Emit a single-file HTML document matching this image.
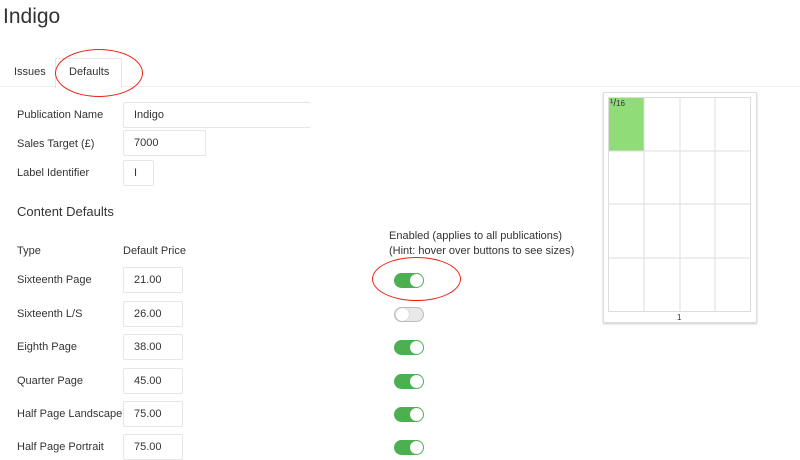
<!DOCTYPE html>
<html><head><style>
body{margin:0;width:800px;height:451px;overflow:hidden;background:#fff;font-family:"Liberation Sans",sans-serif;color:#333;position:relative}
.a{position:absolute;white-space:nowrap}
.lbl{font-size:11px;color:#333}
.inp{position:absolute;border:1px solid #e6e6e6;border-radius:2px;background:#fff;font-size:11px;line-height:25px;padding-left:10px;box-sizing:border-box;height:26px;color:#333}
.tg{position:absolute;left:394px;width:30px;height:15px;border-radius:8px;background:#4caf50;box-sizing:border-box}
.tg::after{content:"";position:absolute;right:1px;top:1px;width:13px;height:13px;border-radius:50%;background:#fff}
.tg.off{background:#e8e8e8;border:1px solid #bbb}
.tg.off::after{left:1px;right:auto;top:0;background:#fff;box-shadow:0 0 1px #999}
</style></head><body>
<div class="a" style="left:3px;top:5px;font-size:21px;color:#333">Indigo</div>
<div class="a" style="left:0;top:86px;width:800px;border-top:1px solid #eee"></div>
<div class="a lbl" style="left:14px;top:66px">Issues</div>
<div class="a" style="left:55px;top:58px;width:65px;height:29px;border:1px solid #e6e6e6;border-bottom:none;background:#fff"></div>
<div class="a lbl" style="left:69px;top:66px">Defaults</div>
<div class="a" style="left:55px;top:49px;width:86px;height:46px;border:1.5px solid #e21;border-radius:50%"></div>

<div class="a lbl" style="left:17px;top:109px">Publication Name</div>
<div class="inp" style="left:123px;top:102px;width:188px;border-right:none">Indigo</div>
<div class="a lbl" style="left:17px;top:138px">Sales Target (£)</div>
<div class="inp" style="left:123px;top:130px;width:83px">7000</div>
<div class="a lbl" style="left:17px;top:167px">Label Identifier</div>
<div class="inp" style="left:123px;top:160px;width:31px">I</div>

<div class="a" style="left:17px;top:204px;font-size:13px">Content Defaults</div>
<div class="a lbl" style="left:17px;top:245px">Type</div>
<div class="a lbl" style="left:123px;top:245px">Default Price</div>
<div class="a lbl" style="left:389px;top:230px">Enabled (applies to all publications)</div>
<div class="a lbl" style="left:389px;top:245px">(Hint: hover over buttons to see sizes)</div>

<div class="a lbl" style="left:17px;top:274px">Sixteenth Page</div><div class="inp" style="left:123px;top:267px;width:60px">21.00</div><div class="tg" style="top:273px"></div>
<div class="a lbl" style="left:17px;top:308px">Sixteenth L/S</div><div class="inp" style="left:123px;top:301px;width:60px">26.00</div><div class="tg off" style="top:307px"></div>
<div class="a lbl" style="left:17px;top:341px">Eighth Page</div><div class="inp" style="left:123px;top:334px;width:60px">38.00</div><div class="tg" style="top:340px"></div>
<div class="a lbl" style="left:17px;top:375px">Quarter Page</div><div class="inp" style="left:123px;top:368px;width:60px">45.00</div><div class="tg" style="top:374px"></div>
<div class="a lbl" style="left:17px;top:408px">Half Page Landscape</div><div class="inp" style="left:123px;top:401px;width:60px">75.00</div><div class="tg" style="top:407px"></div>
<div class="a lbl" style="left:17px;top:441px">Half Page Portrait</div><div class="inp" style="left:123px;top:434px;width:60px">75.00</div><div class="tg" style="top:440px"></div>

<div class="a" style="left:372px;top:257px;width:87px;height:42px;border:1.5px solid #e21;border-radius:50%"></div>

<div class="a" style="left:603px;top:92px;width:154px;height:231px;border:1px solid #ddd;box-shadow:0 1px 2px #ccc;box-sizing:border-box"></div>
<div class="a" style="left:609px;top:98px;width:35px;height:53px;background:#8fdc78"></div>
<div class="a" style="left:610px;top:98px;font-size:10px">¹/<span style="font-size:8px">16</span></div>
<svg class="a" style="left:608px;top:97px" width="143" height="215">
<g stroke="#ddd" fill="none">
<rect x="0.5" y="0.5" width="142" height="214"/>
<line x1="36" y1="0" x2="36" y2="215"/><line x1="72" y1="0" x2="72" y2="215"/><line x1="107" y1="0" x2="107" y2="215"/>
<line x1="0" y1="54" x2="143" y2="54"/><line x1="0" y1="107" x2="143" y2="107"/><line x1="0" y1="161" x2="143" y2="161"/>
</g></svg>
<div class="a" style="left:677px;top:313px;font-size:8px">1</div>
</body></html>
